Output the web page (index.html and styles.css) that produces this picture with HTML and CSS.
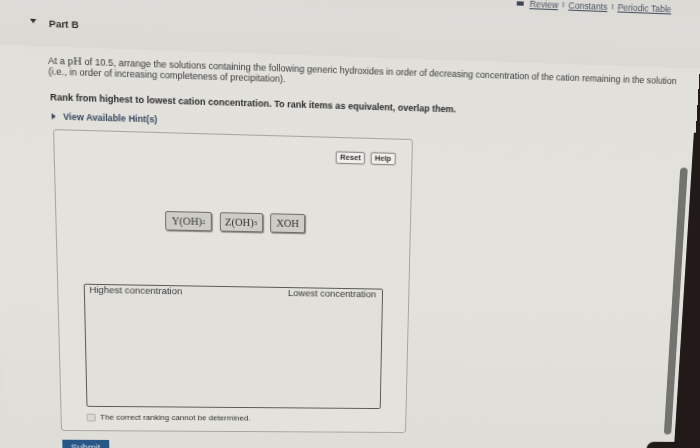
FILE: index.html
```html
<!DOCTYPE html>
<html>
<head>
<meta charset="utf-8">
<link rel="stylesheet" href="styles.css">
</head>
<body>
<div class="screen">
  <div class="page">
    <div class="toplinks">
      <span class="ico"></span>
      <a class="lnk">Review</a><span class="sep">I</span><a class="lnk">Constants</a><span class="sep">I</span><a class="lnk">Periodic Table</a>
    </div>
    <div class="part-band">
      <div class="part-head">
        <span class="tri-down"></span>
        <span class="part-title">Part B</span>
      </div>
    </div>
    <div class="question">
      <p class="q-text">At a <span class="serif">pH</span> of 10.5, arrange the solutions containing the following generic hydroxides in order of decreasing concentration of the cation remaining in the solution<br>(i.e., in order of increasing completeness of precipitation).</p>
      <p class="q-rank">Rank from highest to lowest cation concentration. To rank items as equivalent, overlap them.</p>
      <div class="hint"><span class="tri-right"></span>View Available Hint(s)</div>
    </div>
    <div class="widget">
      <div class="tools">
        <span class="tbtn reset">Reset</span>
        <span class="tbtn help">Help</span>
      </div>
      <div class="items">
        <span class="chip c1">Y(OH)<sub>2</sub></span>
        <span class="chip c2">Z(OH)<sub>3</sub></span>
        <span class="chip c3">XOH</span>
      </div>
      <div class="rankbox">
        <span>Highest concentration</span>
        <span>Lowest concentration</span>
      </div>
      <div class="check-row">
        <span class="cbox"></span>
        <span>The correct ranking cannot be determined.</span>
      </div>
    </div>
    <div class="submit-row"><span class="submit">Submit</span></div>
  </div>
  <div class="thumb"></div>
  <div class="bezel"></div>
  <div class="bezel-corner"></div>
</div>
</body>
</html>
```

FILE: styles.css
```css
html, body {
  margin: 0;
  padding: 0;
  overflow: hidden;
}
html {
  background: #211a18;
}
body {
  width: 700px;
  height: 448px;
  font-family: "Liberation Sans", Arial, sans-serif;
}
.screen {
  position: relative;
  width: 700px;
  height: 448px;
  transform-origin: 0 0;
  transform: matrix3d(1.077165, 0.039805, 0, 0.00007811, 0.036739, 1.10342, 0, 0.00015136, 0, 0, 1, 0, -11.982, -17.877, 0, 1);
  background: linear-gradient(180deg, #dbdad5 0px, #dedcd8 22px, #e1e0db 70px, #e3e2dd 260px, #dfddd7 448px);
  box-shadow: -24px 24px 0 0 #dfddd7, 0 -30px 0 0 #dbdad5;
}
.page {
  display: flow-root;
}
.toplinks {
  display: flex;
  justify-content: flex-end;
  align-items: center;
  height: 10px;
  line-height: 10px;
  margin-top: -4px;
  padding-right: 33px;
  font-size: 8.8px;
  color: #4a5060;
}
.ico {
  width: 7px;
  height: 4px;
  background: #3f4552;
  margin-right: 6px;
}
.lnk {
  text-decoration: underline;
  color: #4a5262;
}
.sep {
  margin: 0 4px;
  font-size: 8px;
  color: #555;
}
.part-band {
  margin-top: 16px;
  height: 35px;
  padding-top: 3px;
  box-sizing: border-box;
  background: linear-gradient(180deg, #dddcd7, #dad9d4);
}
.part-head {
  display: flex;
  align-items: center;
  height: 20px;
  padding-left: 37.5px;
}
.tri-down {
  width: 0;
  height: 0;
  border-left: 3.5px solid transparent;
  border-right: 3.5px solid transparent;
  border-top: 4px solid #333;
  margin-right: 12.3px;
  margin-top: -2px;
}
.part-title {
  font-weight: bold;
  font-size: 9.5px;
  color: #2b2b2b;
}
.question {
  padding-left: 54px;
  padding-top: 8.25px;
}
.q-text {
  margin: 0;
  font-size: 9px;
  line-height: 9.5px;
  color: #3a3a3a;
  white-space: nowrap;
}
.serif {
  font-family: "Liberation Serif", "Times New Roman", serif;
  font-size: 11px;
}
.q-rank {
  margin: 13.25px 0 0 1px;
  font-size: 9px;
  line-height: 10px;
  font-weight: bold;
  color: #2a2a2a;
  white-space: nowrap;
}
.hint {
  display: flex;
  align-items: center;
  height: 10px;
  margin: 8px 0 0 2.4px;
  font-size: 8.8px;
  font-weight: bold;
  color: #3a4b5e;
}
.tri-right {
  width: 0;
  height: 0;
  border-top: 3.5px solid transparent;
  border-bottom: 3.5px solid transparent;
  border-left: 4px solid #3a4b5e;
  margin-right: 6.5px;
}
.widget {
  margin: 7.5px 0 0 57px;
  width: 353px;
  height: 298px;
  box-sizing: border-box;
  border: 1px solid #a6a5a0;
  border-radius: 3px;
  display: flex;
  flex-direction: column;
  background: #e3e2dd;
}
.tools {
  display: flex;
  justify-content: flex-end;
  gap: 5.7px;
  padding: 12.7px 16.5px 0 0;
}
.tbtn {
  box-sizing: border-box;
  height: 12.4px;
  display: flex;
  align-items: center;
  justify-content: center;
  font-size: 7.6px;
  font-weight: bold;
  color: #333;
  background: #f0efeb;
  border: 1px solid #8f8e89;
  border-radius: 2px;
  box-shadow: 0 0 0 1px #d3d2cd;
}
.reset { width: 29px; }
.help { width: 24.7px; }
.items {
  display: flex;
  gap: 7.5px;
  padding-left: 106px;
  margin-top: 50.4px;
}
.chip {
  box-sizing: border-box;
  height: 19px;
  display: flex;
  align-items: center;
  justify-content: center;
  font-family: "Liberation Serif", "Times New Roman", serif;
  font-size: 10.5px;
  color: #333;
  background: #cdccc7;
  border: 1px solid #6f6e68;
  border-radius: 2px;
  box-shadow: 1px 1px 1px #8a8984;
}
.c1 { width: 46px; }
.c2 { width: 43px; }
.c3 { width: 35px; }
.chip sub {
  font-size: 6.5px;
  vertical-align: -1.5px;
  line-height: 0;
}
.rankbox {
  margin: 53.5px 0 0 25px;
  width: 300px;
  height: 124px;
  box-sizing: border-box;
  border: 1px solid #5a5954;
  border-radius: 2px;
  display: flex;
  justify-content: space-between;
  align-items: flex-start;
  padding: 0 6px 0 4.4px;
  font-size: 9.5px;
  line-height: 10px;
  color: #3a3a3a;
  background: #e1e0db;
}
.check-row {
  display: flex;
  align-items: center;
  height: 10px;
  margin: 6px 0 0 25px;
  font-size: 8.1px;
  color: #2d2d2d;
}
.cbox {
  box-sizing: border-box;
  width: 8.5px;
  height: 8.5px;
  border: 1px solid #b3b2ad;
  background: #d9d8d3;
  border-radius: 1px;
  margin-right: 4.8px;
}
.submit-row {
  padding: 9.3px 0 0 57.8px;
}
.submit {
  display: block;
  box-sizing: border-box;
  width: 47px;
  height: 18px;
  padding-top: 3px;
  background: #275786;
  color: #dfe6ee;
  font-size: 9.5px;
  line-height: 10px;
  text-align: center;
}
.thumb {
  position: absolute;
  left: 686px;
  top: 155px;
  width: 7.5px;
  height: 277px;
  border-radius: 4px;
  background: #737370;
}
.bezel {
  position: absolute;
  left: 697.5px;
  top: 120px;
  width: 2.5px;
  height: 328px;
  background: #221b19;
}
.bezel-corner {
  position: absolute;
  left: 668px;
  top: 440px;
  width: 32px;
  height: 8px;
  border-top-left-radius: 8px;
  background: #1f1917;
}
```
